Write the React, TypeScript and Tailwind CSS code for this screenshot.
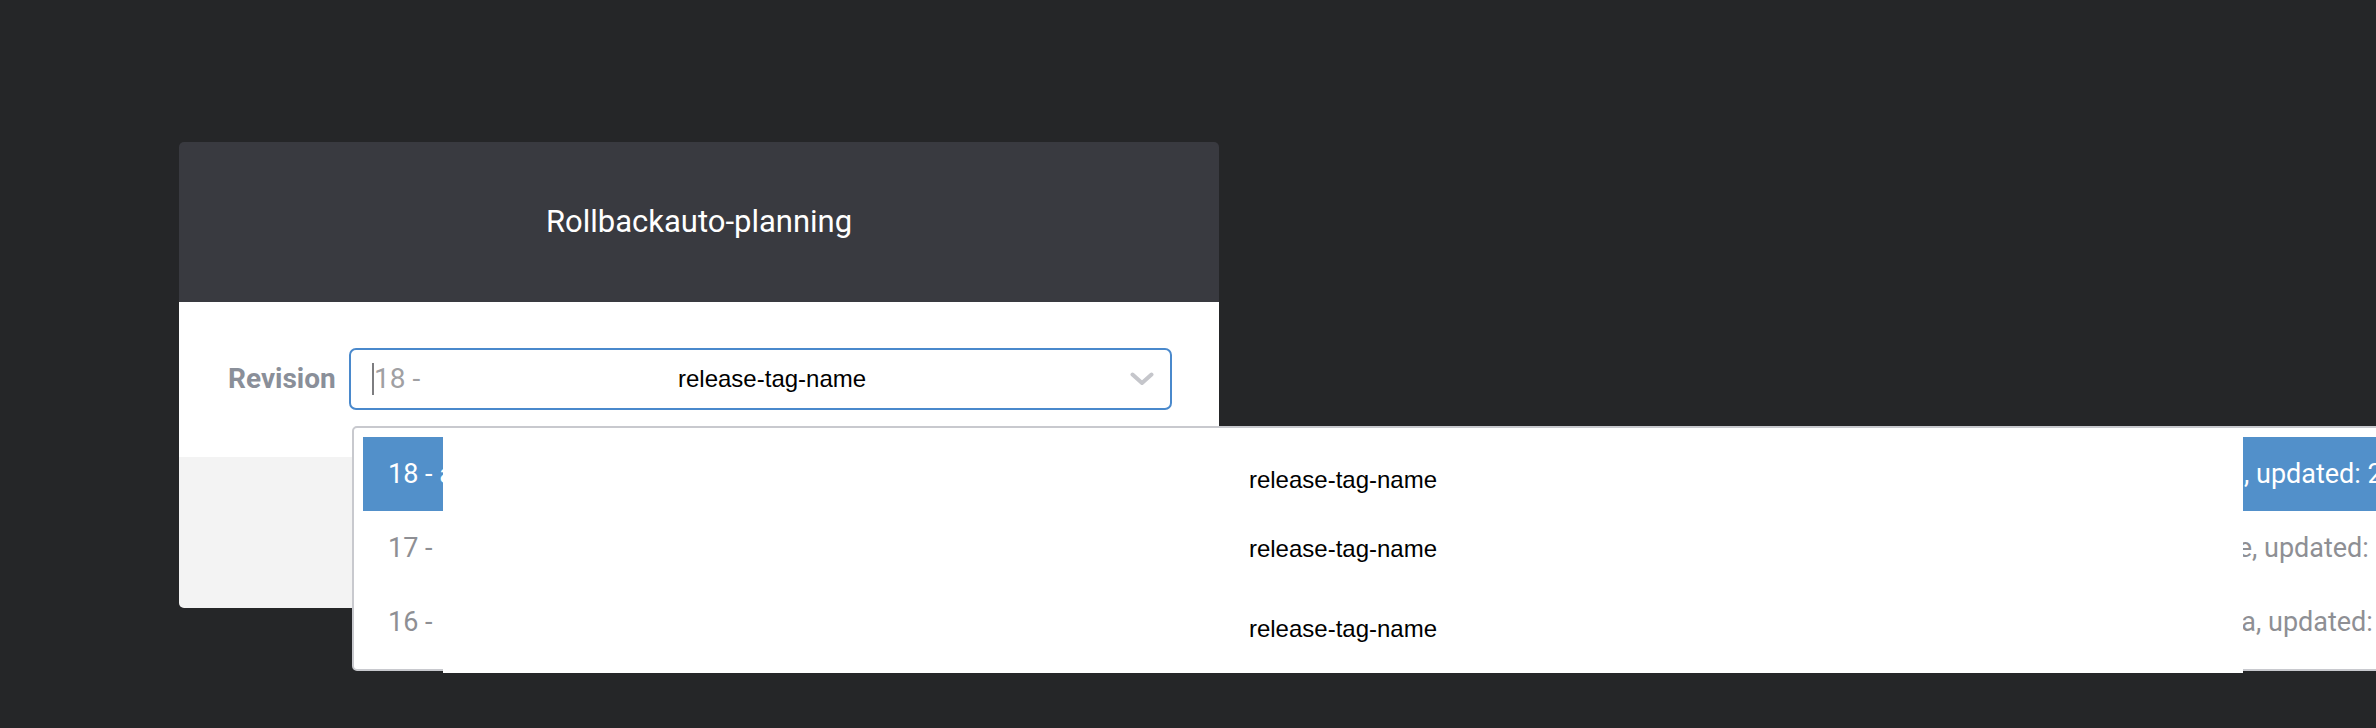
import React from "react";

const rows = [
  {
    lead: "18 - auto-planning",
    tail: "deploy-7f3c9b1",
    w: "w-[1856px]",
    date: "2019-03-12 14:22:07",
    active: true,
  },
  {
    lead: "17 -",
    tail: "auto-planning-deploy-5a20c4e",
    w: "w-[1864px]",
    date: "2019-03-08 09:41:55",
    active: false,
  },
  {
    lead: "16 -",
    tail: "auto-planning-deploy-e91d2ba",
    w: "w-[1868px]",
    date: "2019-03-01 17:05:13",
    active: false,
  },
];

function Chevron() {
  return (
    <svg width="24" height="14" viewBox="0 0 24 14" fill="none">
      <path
        d="M2.5 2.5 L12 11 L21.5 2.5"
        stroke="#c5c6cb"
        strokeWidth="4"
        strokeLinecap="round"
        strokeLinejoin="round"
      />
    </svg>
  );
}

function RevisionSelect() {
  return (
    <div className="relative w-[823px] h-[62px] shrink-0">
      <div className="relative flex items-center h-full rounded-[7px] border-2 border-[#4a89cc] bg-white pl-[21px] pr-[16px]">
        <span className="w-[2px] h-[32px] bg-[#7d7d80]"></span>
        <span className="text-[28px] text-[#a0a0a3]">18 -</span>
        <span className="absolute left-[327px] top-1/2 -translate-y-1/2 font-['Liberation_Sans',Arial,sans-serif] text-[24px] leading-[24px] text-black">
          release-tag-name
        </span>
        <span className="ml-auto flex items-center">
          <Chevron />
        </span>
      </div>

      {/* open list */}
      <div className="absolute left-[3px] top-[78px] z-10 w-[2100px] rounded-[5px] border-2 border-[#c8c9ce] bg-white pt-[9px] pb-[10px] px-[9px]">
        {rows.map((r) => (
          <div
            key={r.lead}
            className={`flex items-center h-[74px] pl-[25px] overflow-hidden whitespace-nowrap text-[27px] ${
              r.active ? "bg-[#5290ca] text-white" : "text-[#8e8f94]"
            }`}
          >
            <span className={`${r.w} shrink-0 flex justify-between overflow-hidden`}>
              <span>{r.lead}</span>
              <span>{r.tail}</span>
            </span>
            <span>, updated: {r.date}</span>
          </div>
        ))}
      </div>
    </div>
  );
}

export default function App() {
  return (
    <div className="relative w-[2376px] h-[728px] overflow-hidden bg-[#252628] pt-[142px] pl-[179px] font-['Roboto',sans-serif]">
      <div className="w-[1040px]">
        <div className="flex h-[160px] items-center justify-center rounded-t-[5px] bg-[#393a40]">
          <h2 className="text-[31px] text-white">Rollbackauto-planning</h2>
        </div>
        <div className="flex h-[155px] items-start bg-white pt-[46px] pl-[49px]">
          <div className="flex items-center gap-[16px]">
            <label className="w-[105px] shrink-0 text-right text-[28px] font-bold text-[#8a8f99]">
              Revision
            </label>
            <RevisionSelect />
          </div>
        </div>
        <div className="h-[151px] rounded-b-[5px] bg-[#f3f3f3]"></div>
      </div>

      {/* white cover pasted over the list */}
      <div className="absolute left-[443px] top-[428px] z-20 flex h-[245px] w-[1800px] flex-col items-center bg-white pt-[40px] font-['Liberation_Sans',Arial,sans-serif] text-[24px] leading-[24px] text-black">
        <span>release-tag-name</span>
        <span className="mt-[45px]">release-tag-name</span>
        <span className="mt-[56px]">release-tag-name</span>
      </div>
    </div>
  );
}
